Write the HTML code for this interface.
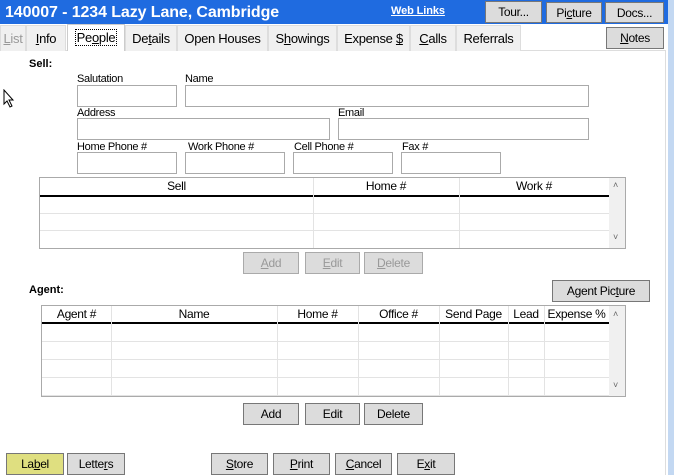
<!DOCTYPE html>
<html><head><meta charset="utf-8"><style>
*{margin:0;padding:0;box-sizing:border-box}
body{width:674px;height:475px;overflow:hidden;background:#fff;position:relative;font-family:"Liberation Sans",Arial,sans-serif;font-size:12px;color:#000}
.a{position:absolute}
.btn{position:absolute;background:#dcdcdc;border:1px solid #777;text-align:center;font-size:12px;line-height:20px;color:#000;letter-spacing:-0.3px}
.dis{color:#999;border-color:#aaa}
.tab{position:absolute;top:25px;height:26px;background:#f0f0f0;border:1px solid #ddd;border-bottom:none;text-align:center;line-height:25px;font-size:13px;letter-spacing:-0.3px}
.lbl{position:absolute;font-size:11px;letter-spacing:-0.3px}
.in{position:absolute;border:1px solid #aaa;background:#fff;height:22px}
.grid{position:absolute;border:1px solid #aaa;background:#fff}
.hd{position:absolute;text-align:center;font-size:12px;letter-spacing:-0.3px}
.vl{position:absolute;width:1px;background:#e3e3e3}
.hl{position:absolute;height:1px;background:#e3e3e3}
.sb{position:absolute;background:#f0f0f0}
.ch{position:absolute;font-size:9px;color:#666}
u{text-decoration:underline}
</style></head><body>
<div class="a" style="left:0;top:0;width:668px;height:24px;background:#1f6be0"></div>
<div class="a" style="left:668px;top:0;width:6px;height:475px;background:#c3d8f2"></div>
<div class="a" style="left:665px;top:50px;width:1px;height:425px;background:#ddd"></div>
<div class="a" style="left:5px;top:2px;color:#fff;font-weight:bold;font-size:16px;line-height:22px;letter-spacing:-0.1px">140007 - 1234 Lazy Lane, Cambridge</div>
<div class="a" style="left:391px;top:5px;color:#fff;font-weight:bold;font-size:11px;text-decoration:underline;letter-spacing:-0.1px">Web Links</div>
<div class="btn" style="left:485px;top:1px;width:57px;height:22px">Tour...</div>
<div class="btn" style="left:546px;top:2px;width:56px;height:21px">Pi<u>c</u>ture</div>
<div class="btn" style="left:605px;top:2px;width:59px;height:21px">Docs...</div>

<div class="a" style="left:0;top:50px;width:666px;height:1px;background:#ddd"></div>
<div class="tab" style="left:0;width:26px;color:#999"><u>L</u>ist</div>
<div class="tab" style="left:26px;width:40px"><u>I</u>nfo</div>
<div class="tab" style="left:67px;top:24px;width:58px;height:27px;background:#fff;border-color:#ccc"><span style="outline:1px dotted #000;padding:0 1px">Pe<u>o</u>ple</span></div>
<div class="tab" style="left:125px;width:52px">De<u>t</u>ails</div>
<div class="tab" style="left:177px;width:91px">Open Houses</div>
<div class="tab" style="left:268px;width:69px">S<u>h</u>owings</div>
<div class="tab" style="left:337px;width:73px">Expense <u>$</u></div>
<div class="tab" style="left:410px;width:46px"><u>C</u>alls</div>
<div class="tab" style="left:456px;width:65px">Referrals</div>
<div class="btn" style="left:606px;top:27px;width:58px;height:22px"><u>N</u>otes</div>

<svg class="a" style="left:3px;top:89px" width="12" height="20" viewBox="0 0 12 20"><path d="M1 1 L1 15 L4 12 L7 18 L9 17 L6 11 L10 11 Z" fill="#fff" stroke="#000" stroke-width="1"/></svg>

<div class="a" style="left:29px;top:58px;font-weight:bold;font-size:11px">Sell:</div>
<div class="lbl" style="left:77px;top:73px">Salutation</div>
<div class="lbl" style="left:185px;top:73px">Name</div>
<div class="in" style="left:77px;top:85px;width:100px"></div>
<div class="in" style="left:185px;top:85px;width:404px"></div>
<div class="lbl" style="left:77px;top:107px">Address</div>
<div class="lbl" style="left:338px;top:107px">Email</div>
<div class="in" style="left:77px;top:118px;width:253px"></div>
<div class="in" style="left:338px;top:118px;width:251px"></div>
<div class="lbl" style="left:77px;top:141px">Home Phone #</div>
<div class="lbl" style="left:188px;top:141px">Work Phone #</div>
<div class="lbl" style="left:294px;top:141px">Cell Phone #</div>
<div class="lbl" style="left:402px;top:141px">Fax #</div>
<div class="in" style="left:77px;top:152px;width:100px"></div>
<div class="in" style="left:185px;top:152px;width:100px"></div>
<div class="in" style="left:293px;top:152px;width:100px"></div>
<div class="in" style="left:401px;top:152px;width:100px"></div>

<div class="grid" style="left:39px;top:177px;width:587px;height:72px"></div>
<div class="sb" style="left:609px;top:178px;width:16px;height:70px"></div>
<div class="ch" style="left:613px;top:180px">&#708;</div>
<div class="ch" style="left:613px;top:232px">&#709;</div>
<div class="hd" style="left:40px;top:179px;width:273px">Sell</div>
<div class="hd" style="left:313px;top:179px;width:146px">Home #</div>
<div class="hd" style="left:459px;top:179px;width:150px">Work #</div>
<div class="a" style="left:40px;top:195px;width:569px;height:2px;background:#000"></div>
<div class="vl" style="left:313px;top:178px;height:70px"></div>
<div class="vl" style="left:459px;top:178px;height:70px"></div>
<div class="hl" style="left:40px;top:213px;width:569px"></div>
<div class="hl" style="left:40px;top:230px;width:569px"></div>

<div class="btn dis" style="left:243px;top:252px;width:56px;height:22px"><u>A</u>dd</div>
<div class="btn dis" style="left:305px;top:252px;width:55px;height:22px"><u>E</u>dit</div>
<div class="btn dis" style="left:364px;top:252px;width:59px;height:22px"><u>D</u>elete</div>

<div class="a" style="left:29px;top:284px;font-weight:bold;font-size:11px">Agent:</div>
<div class="btn" style="left:552px;top:280px;width:98px;height:22px">Agent Pic<u>t</u>ure</div>

<div class="grid" style="left:41px;top:305px;width:585px;height:92px"></div>
<div class="sb" style="left:609px;top:306px;width:16px;height:90px"></div>
<div class="ch" style="left:613px;top:309px">&#708;</div>
<div class="ch" style="left:613px;top:380px">&#709;</div>
<div class="hd" style="left:42px;top:307px;width:69px">Agent #</div>
<div class="hd" style="left:111px;top:307px;width:166px">Name</div>
<div class="hd" style="left:277px;top:307px;width:81px">Home #</div>
<div class="hd" style="left:358px;top:307px;width:81px">Office #</div>
<div class="hd" style="left:439px;top:307px;width:69px">Send Page</div>
<div class="hd" style="left:508px;top:307px;width:36px">Lead</div>
<div class="hd" style="left:544px;top:307px;width:65px;white-space:nowrap">Expense %</div>
<div class="a" style="left:42px;top:322px;width:567px;height:2px;background:#000"></div>
<div class="vl" style="left:111px;top:306px;height:90px"></div>
<div class="vl" style="left:277px;top:306px;height:90px"></div>
<div class="vl" style="left:358px;top:306px;height:90px"></div>
<div class="vl" style="left:439px;top:306px;height:90px"></div>
<div class="vl" style="left:508px;top:306px;height:90px"></div>
<div class="vl" style="left:544px;top:306px;height:90px"></div>
<div class="hl" style="left:42px;top:341px;width:567px"></div>
<div class="hl" style="left:42px;top:359px;width:567px"></div>
<div class="hl" style="left:42px;top:377px;width:567px"></div>
<div class="hl" style="left:42px;top:395px;width:567px"></div>

<div class="btn" style="left:243px;top:403px;width:56px;height:22px">Add</div>
<div class="btn" style="left:305px;top:403px;width:55px;height:22px">Edit</div>
<div class="btn" style="left:364px;top:403px;width:59px;height:22px">Delete</div>

<div class="btn" style="left:6px;top:453px;width:58px;height:22px;background:#dfdf80">La<u>b</u>el</div>
<div class="btn" style="left:67px;top:453px;width:58px;height:22px">Lette<u>r</u>s</div>
<div class="btn" style="left:211px;top:453px;width:57px;height:22px"><u>S</u>tore</div>
<div class="btn" style="left:273px;top:453px;width:57px;height:22px"><u>P</u>rint</div>
<div class="btn" style="left:335px;top:453px;width:57px;height:22px"><u>C</u>ancel</div>
<div class="btn" style="left:397px;top:453px;width:58px;height:22px">E<u>x</u>it</div>
</body></html>
